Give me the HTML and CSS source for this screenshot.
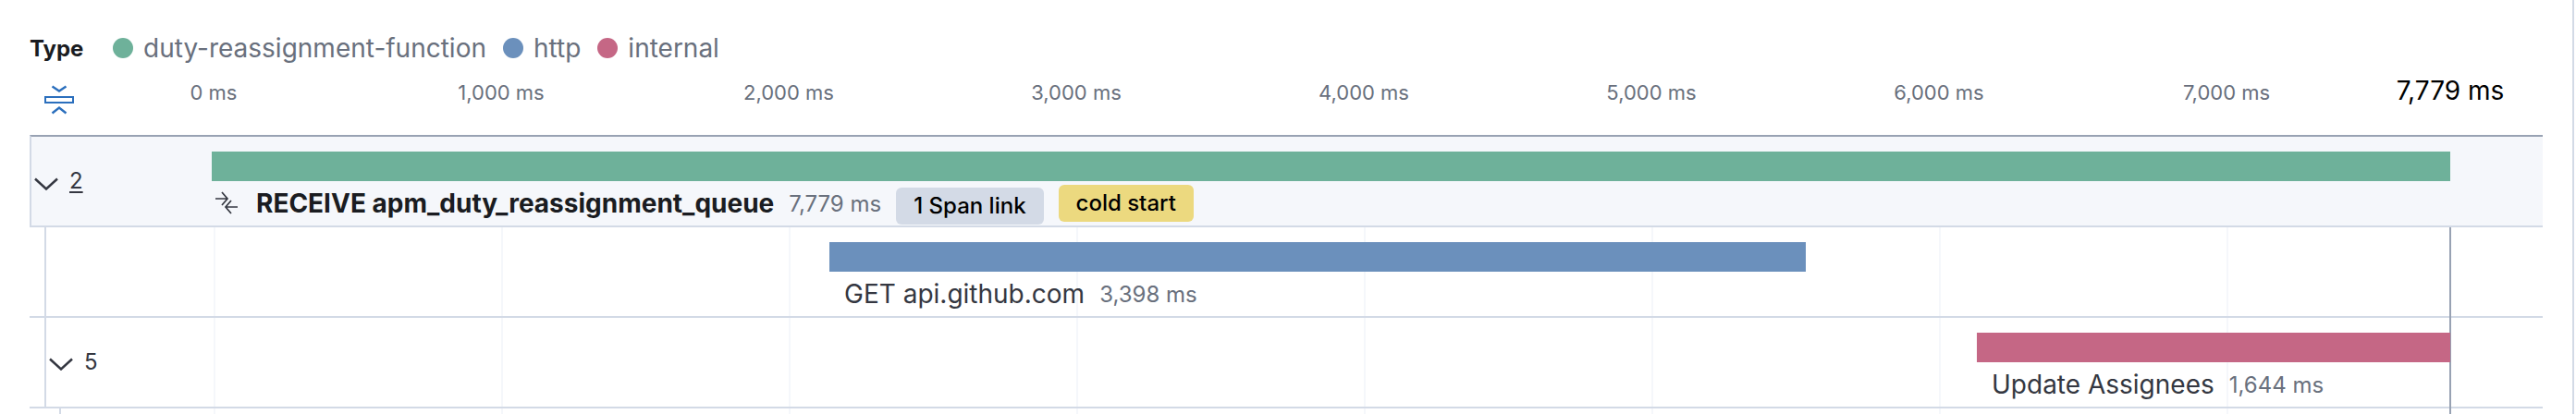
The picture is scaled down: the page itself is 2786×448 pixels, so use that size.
FILE: index.html
```html
<!DOCTYPE html>
<html lang="en">

<head>
    <meta charset="UTF-8">
    <meta name="viewport" content="width=device-width, initial-scale=1.0">
    <link rel="stylesheet" href="styles.css">
    <title>Trace waterfall</title>
</head>

<body>
    <div class="page">
        <div class="legend">
            <span class="legend-title">Type</span>
            <span class="legend-item"><span class="dot dot-green"></span>duty-reassignment-function</span>
            <span class="legend-item"><span class="dot dot-blue"></span>http</span>
            <span class="legend-item"><span class="dot dot-pink"></span>internal</span>
        </div>

        <div class="axis">
            <svg class="collapse-icon" width="32" height="32" viewBox="0 0 32 32" fill="none" stroke="#2b6fbd" stroke-width="2">
                <path d="M8.5 1.5l7.5 5 7.5-5" stroke-width="2.4" />
                <rect x="1" y="13" width="30" height="6" />
                <path d="M8.5 30.500l7.500-6 7.500 6" stroke-width="2.400" />
            </svg>
            <div class="ticks">
                <span class="tick">0 ms</span>
                <span class="tick">1,000 ms</span>
                <span class="tick">2,000 ms</span>
                <span class="tick">3,000 ms</span>
                <span class="tick">4,000 ms</span>
                <span class="tick">5,000 ms</span>
                <span class="tick">6,000 ms</span>
                <span class="tick">7,000 ms</span>
            </div>
            <span class="axis-end">7,779 ms</span>
        </div>

        <div class="waterfall">
            <div class="row row-root">
                <div class="toggle">
                    <svg class="chevron" width="26" height="14" viewBox="0 0 26 14" fill="none">
                        <path d="M1 1.500l12 11 12-11" />
                    </svg>
                    <span class="count count-link">2</span>
                </div>
                <div class="span-cell">
                    <div class="bar bar-green" style="margin-left: 0; width: 2421px"></div>
                    <div class="span-label span-label-root">
                        <svg class="kind-icon" width="24" height="26" viewBox="0 0 24 26" fill="none">
                            <path d="M0 8h13M7 1l6 7-6 7M24 17H11M17 10l-6 7 6 7" />
                        </svg>
                        <span class="span-name span-name-bold">RECEIVE apm_duty_reassignment_queue</span>
                        <span class="span-time">7,779 ms</span>
                        <span class="badge badge-grey">1 Span link</span>
                        <span class="badge badge-yellow">cold start</span>
                    </div>
                </div>
            </div>

            <div class="children">
                <div class="gridlines">
                    <span class="gridline"></span>
                    <span class="gridline"></span>
                    <span class="gridline"></span>
                    <span class="gridline"></span>
                    <span class="gridline"></span>
                    <span class="gridline"></span>
                    <span class="gridline"></span>
                    <span class="gridline"></span>
                </div>
                <div class="end-line"></div>
                <div class="guide guide-one"></div>
                <div class="guide guide-two"></div>

                <div class="row">
                    <div class="toggle"></div>
                    <div class="span-cell">
                        <div class="bar bar-blue" style="margin-left: 668px; width: 1056px"></div>
                        <div class="span-label" style="margin-left: 684px">
                            <span class="span-name">GET api.github.com</span>
                            <span class="span-time">3,398 ms</span>
                        </div>
                    </div>
                </div>

                <div class="row">
                    <div class="toggle">
                        <svg class="chevron" width="26" height="14" viewBox="0 0 26 14" fill="none">
                            <path d="M1 1.500l12 11 12-11" />
                        </svg>
                        <span class="count">5</span>
                    </div>
                    <div class="span-cell">
                        <div class="bar bar-pink" style="margin-left: 1909px; width: 512px"></div>
                        <div class="span-label" style="margin-left: 1925px">
                            <span class="span-name">Update Assignees</span>
                            <span class="span-time">1,644 ms</span>
                        </div>
                    </div>
                </div>
            </div>
        </div>
    </div>
</body>

</html>
```

FILE: styles.css
```css
* {
    padding: 0;
    margin: 0;
    box-sizing: border-box;
}

body {
    background-color: #fff;
    font-family: "Inter", "Liberation Sans", sans-serif;
    color: #343741;
}

.page {
    width: 2784px;
    height: 448px;
    overflow: hidden;
    padding-top: 32px;
    border-right: 2px solid #d3dae6;
}

.legend {
    display: flex;
    align-items: center;
    gap: 18px;
    height: 40px;
    padding-left: 32px;
    font-size: 28px;
    color: #69707d;
}

.legend-title {
    width: 72px;
    font-size: 24px;
    font-weight: 700;
    color: #1a1c21;
}

.legend-item {
    display: flex;
    align-items: center;
    gap: 11px;
}

.dot {
    width: 22px;
    height: 22px;
    border-radius: 50%;
}

.dot-green,
.bar-green {
    background-color: #6eb19a;
}

.dot-blue,
.bar-blue {
    background-color: #6b90bc;
}

.dot-pink,
.bar-pink {
    background-color: #c56785;
}

.axis {
    position: relative;
    display: flex;
    height: 74px;
    padding-left: 48px;
}

.collapse-icon {
    flex: none;
    margin-top: 20px;
}

.ticks {
    display: flex;
    margin-left: -4.500px;
    padding-top: 16px;
}

.tick {
    width: 311px;
    text-align: center;
    font-size: 22px;
    line-height: 24px;
    color: #69707d;
}

.axis-end {
    position: absolute;
    top: 8px;
    left: 2650px;
    transform: translateX(-50%);
    font-size: 28px;
    line-height: 36px;
    color: #000;
}

.waterfall {
    width: 2750px;
    padding-left: 32px;
}

.row {
    display: flex;
    height: 98px;
    border-bottom: 2px solid #d3dae6;
}

.row-root {
    background-color: #f5f7fb;
    height: 100px;
    border-top: 2px solid #98a2b3;
    border-left: 2px solid #d3dae6;
}

.toggle {
    flex: none;
    display: flex;
    align-items: center;
    width: 197px;
    gap: 12px;
    padding-left: 21px;
}

.row-root .toggle {
    width: 195px;
    padding-left: 3px;
}

.chevron {
    margin-top: 4px;
}

.row-root .chevron {
    margin-top: 6px;
}

.chevron path {
    stroke: #343741;
    stroke-width: 2.500px;
}

.count {
    font-size: 24px;
    line-height: 28px;
}

.count-link {
    text-decoration: underline;
    text-underline-offset: 3px;
}

.span-cell {
    flex: 1;
    padding-top: 16px;
}

.bar {
    position: relative;
    z-index: 2;
    height: 32px;
}

.span-label {
    display: flex;
    align-items: center;
    gap: 16px;
    height: 44px;
    margin-top: 2px;
    font-size: 28px;
    white-space: nowrap;
}

.span-label-root {
    padding-left: 4px;
}

.kind-icon path {
    stroke: #343741;
    stroke-width: 1.700px;
}

.span-name-bold {
    font-weight: 700;
    color: #1a1c21;
    margin-left: 4px;
}

.span-time {
    font-size: 24px;
    color: #69707d;
}

.badge {
    padding: 0 19px;
    height: 40px;
    line-height: 40px;
    border-radius: 6px;
    font-size: 24px;
    font-weight: 500;
    color: #000;
}

.badge-grey {
    background-color: #d3dae6;
    margin-top: 6px;
}

.badge-yellow {
    background-color: #ecd97f;
}

.children {
    position: relative;
    height: 202px;
}

.gridlines {
    position: absolute;
    top: 0;
    left: 199px;
    bottom: 0;
    display: flex;
    z-index: -1;
}

.gridline {
    width: 311px;
    border-left: 2px solid #f5f7fb;
}

.end-line {
    position: absolute;
    top: 0;
    bottom: 0;
    left: 2617px;
    width: 2px;
    background-color: #98a2b3;
    z-index: 1;
}

.guide {
    position: absolute;
    width: 2px;
    background-color: #d3dae6;
}

.guide-one {
    top: 0;
    left: 16px;
    height: 194px;
}

.guide-two {
    top: 196px;
    left: 32px;
    bottom: 0;
}
```
